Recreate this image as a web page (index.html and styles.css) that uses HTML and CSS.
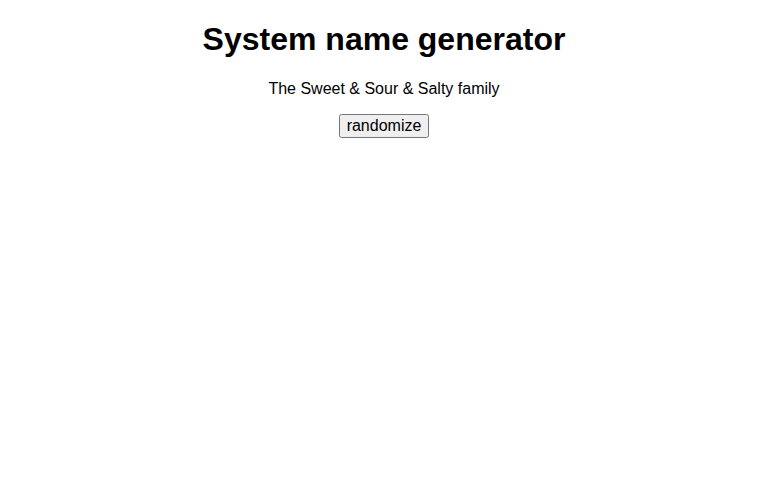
FILE: index.html
```html
<!DOCTYPE html>
<html lang="en">
<head>
    <meta charset="UTF-8">
    <meta name="viewport" content="width=device-width, initial-scale=1.0">
    <title>System name generator</title>
    <link rel="stylesheet" href="styles.css">
</head>
<body>
    <h1>System name generator</h1>

    <p id="systemName">The Sweet &amp; Sour &amp; Salty family</p>

    <button type="button" onclick="randomize()">randomize</button>

    <script>
        const words = ['Sweet', 'Sour', 'Salty', 'Bitter', 'Spicy', 'Smoky', 'Tangy', 'Savory'];

        function pick() {
            return words[Math.floor(Math.random() * words.length)];
        }

        function randomize() {
            let name = `The ${pick()} & ${pick()} & ${pick()} family`;
            document.getElementById('systemName').innerText = name;
        }
    </script>
</body>
</html>
```

FILE: styles.css
```css
body {
    font-family: "Liberation Sans", Arial, sans-serif;
    text-align: center;
    background-color: white;
    color: black;
    margin: 0 8px 8px;
}

button {
    font-family: inherit;
    font-size: 1em;
}
```
